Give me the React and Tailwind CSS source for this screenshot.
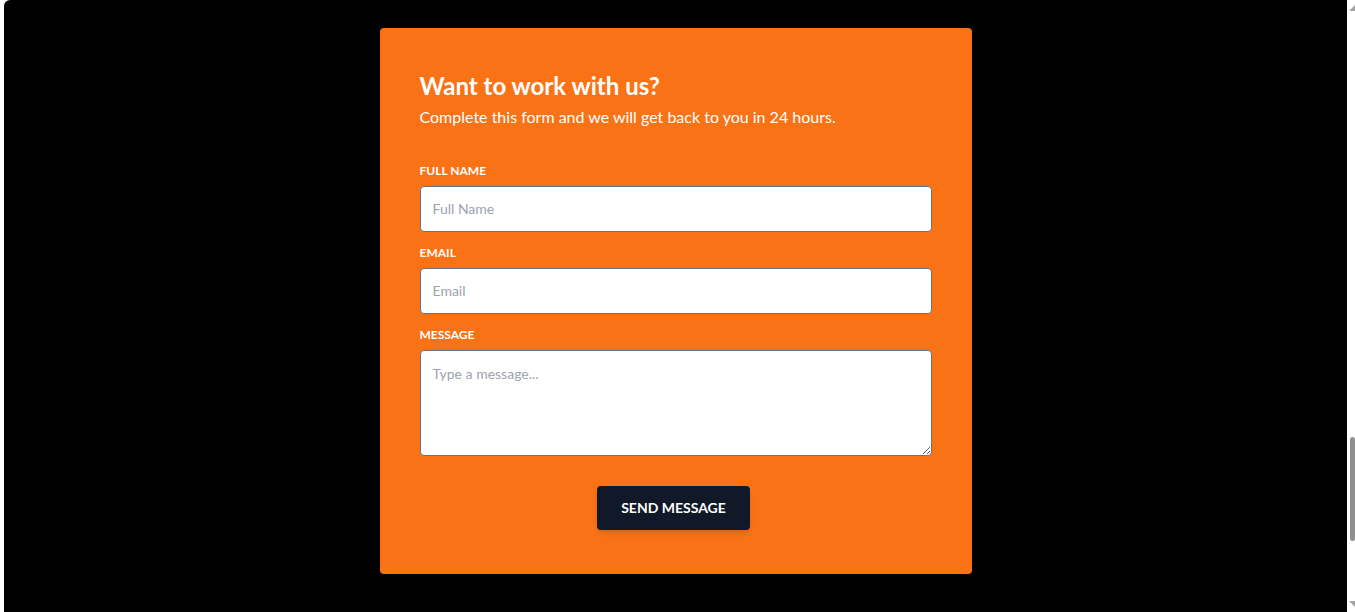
import React from "react";

const Field = ({ label, placeholder, type = "text" }) => {
  return (
    <div className="flex flex-col">
      <label className="text-xs leading-4 font-bold uppercase text-white pt-px mb-[7px]">{label}</label>
      <input
        type={type}
        placeholder={placeholder}
        className="h-[46px] w-full rounded border border-[#6b7280] bg-white px-3 pb-px text-sm text-gray-800 placeholder:text-[#9ca3af] outline-none"
      />
    </div>
  );
};

const ScrollBar = () => {
  return (
    <div className="w-2 h-full bg-white flex flex-col items-end">
      <svg width="7" height="6" viewBox="0 0 7 6" className="mt-[5px]">
        <polygon points="7,0 7,6 1,6" fill="#a3a3a3" />
      </svg>
      <div className="mt-[426px] w-[5px] h-[104px] rounded-sm bg-[#8f8f8f]" />
      <div className="flex-1" />
      <svg width="7" height="6" viewBox="0 0 7 6" className="mb-[5px]">
        <polygon points="1,0 7,0 7,6" fill="#a3a3a3" />
      </svg>
    </div>
  );
};

const App = () => {
  return (
    <div className="w-full h-[612px] flex bg-white overflow-hidden" style={{ fontFamily: "Lato, 'Noto Sans', sans-serif" }}>
      <div className="w-1 bg-white" />
      <div className="flex-1 bg-black rounded-tl-md pt-7">
        <div className="mx-auto w-[592px] bg-[#f97316] rounded-sm px-10 pt-[42px] pb-[44px]">
          <h2 className="text-2xl leading-8 font-bold text-white">Want to work with us?</h2>
          <p className="mt-[3px] text-base leading-6 text-white">Complete this form and we will get back to you in 24 hours.</p>

          <form className="mt-[33px] flex flex-col gap-3" onSubmit={(e) => e.preventDefault()}>
            <Field label="Full Name" placeholder="Full Name" />
            <Field label="Email" placeholder="Email" type="email" />
            <div className="flex flex-col">
              <label className="text-xs leading-4 font-bold uppercase text-white pt-px mb-[7px]">Message</label>
              <textarea
                placeholder="Type a message..."
                className="h-[106px] w-full rounded border border-[#6b7280] bg-white px-3 py-[13px] text-sm text-gray-800 placeholder:text-[#9ca3af] outline-none"
              />
            </div>
            <div className="flex justify-center pr-1 mt-[18px]">
              <button className="h-11 w-[153px] rounded bg-[#111827] text-sm font-bold uppercase text-white shadow-md">
                Send Message
              </button>
            </div>
          </form>
        </div>
      </div>
      <ScrollBar />
    </div>
  );
};

export default App;
